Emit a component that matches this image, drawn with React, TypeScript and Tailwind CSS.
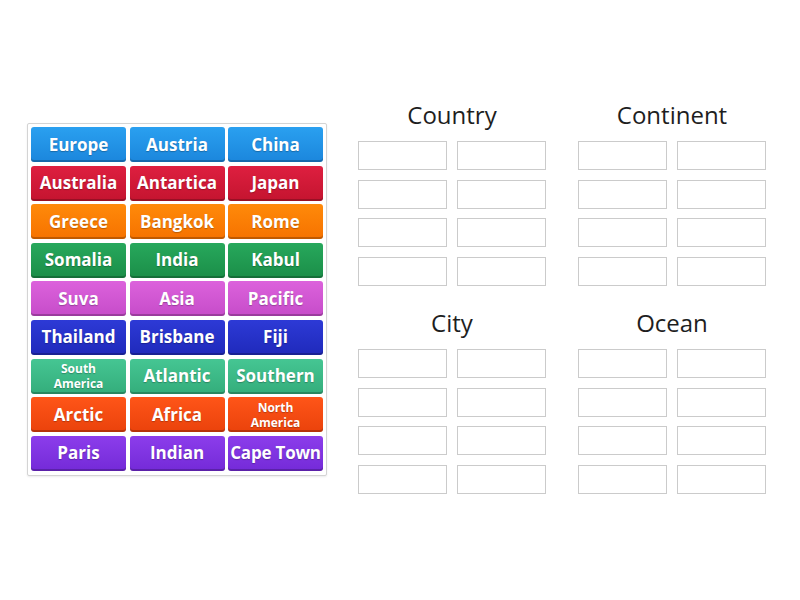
import React from "react";

type Tile = { label: string; color: string; small?: boolean };

const C = {
  blue: "bg-gradient-to-b from-[#2aa0f0] to-[#1b86dc]",
  red: "bg-gradient-to-b from-[#de1f40] to-[#c4142f]",
  orange: "bg-gradient-to-b from-[#ff8a0a] to-[#f67200]",
  green: "bg-gradient-to-b from-[#27a85c] to-[#1b8e48]",
  magenta: "bg-gradient-to-b from-[#dc62dc] to-[#c64cc9]",
  navy: "bg-gradient-to-b from-[#2d3ad6] to-[#1f29bb]",
  teal: "bg-gradient-to-b from-[#45c693] to-[#34ad7b]",
  tomato: "bg-gradient-to-b from-[#ff5518] to-[#ea420b]",
  purple: "bg-gradient-to-b from-[#8c3deb] to-[#742ad8]",
};

const tiles: Tile[] = [
  { label: "Europe", color: C.blue },
  { label: "Austria", color: C.blue },
  { label: "China", color: C.blue },
  { label: "Australia", color: C.red },
  { label: "Antartica", color: C.red },
  { label: "Japan", color: C.red },
  { label: "Greece", color: C.orange },
  { label: "Bangkok", color: C.orange },
  { label: "Rome", color: C.orange },
  { label: "Somalia", color: C.green },
  { label: "India", color: C.green },
  { label: "Kabul", color: C.green },
  { label: "Suva", color: C.magenta },
  { label: "Asia", color: C.magenta },
  { label: "Pacific", color: C.magenta },
  { label: "Thailand", color: C.navy },
  { label: "Brisbane", color: C.navy },
  { label: "Fiji", color: C.navy },
  { label: "South America", color: C.teal, small: true },
  { label: "Atlantic", color: C.teal },
  { label: "Southern", color: C.teal },
  { label: "Arctic", color: C.tomato },
  { label: "Africa", color: C.tomato },
  { label: "North America", color: C.tomato, small: true },
  { label: "Paris", color: C.purple },
  { label: "Indian", color: C.purple },
  { label: "Cape Town", color: C.purple },
];

function Group({ title }: { title: string }) {
  return (
    <div className="flex w-[188px] flex-col">
      <div className="h-[26px] text-center text-[24px] leading-[26px] text-[#1e1e1e]">
        {title}
      </div>
      <div className="mt-[13px] grid grid-cols-2 gap-x-[10px] gap-y-[9.5px]">
        {Array.from({ length: 8 }).map((_, i) => (
          <div
            key={i}
            className="h-[29px] w-[89px] border border-[#cbcbcb] bg-white"
          />
        ))}
      </div>
    </div>
  );
}

export default function App() {
  return (
    <div
      className="flex h-[600px] w-[800px] items-start bg-white pl-[27px] pt-[102px]"
      style={{ fontFamily: '"Open Sans", "Noto Sans", sans-serif' }}
    >
      <div className="mt-[21px] w-[300px] rounded-[2px] border border-[#d4d4d4] bg-white px-[3px] pb-[4px] pt-[3px] shadow-[0_1px_2px_rgba(0,0,0,0.08)]">
        <div className="grid grid-cols-[95px_95px_95px] gap-x-[3.5px] gap-y-[3.6px]">
          {tiles.map((t) => (
            <div
              key={t.label}
              className={`${t.color} flex h-[35px] items-center justify-center whitespace-nowrap rounded-[3px] text-center font-bold text-white shadow-[inset_0_-2px_0_rgba(0,0,0,0.22)] [text-shadow:0_1px_1px_rgba(0,0,0,0.25)] ${
                t.small ? "text-[12px] leading-[15px]" : "text-[17px] leading-[22px]"
              }`}
            >
              {t.small ? (
                <span className="flex flex-col">
                  <span>{t.label.split(" ")[0]}</span>
                  <span>{t.label.split(" ")[1]}</span>
                </span>
              ) : (
                <span className={t.label === "Cape Town" ? "tracking-[-0.2px]" : ""}>{t.label}</span>
              )}
            </div>
          ))}
        </div>
      </div>
      <div className="ml-[31px] flex flex-col gap-y-[24.5px]">
        <div className="flex gap-x-[32px]">
          <Group title="Country" />
          <Group title="Continent" />
        </div>
        <div className="flex gap-x-[32px]">
          <Group title="City" />
          <Group title="Ocean" />
        </div>
      </div>
    </div>
  );
}
